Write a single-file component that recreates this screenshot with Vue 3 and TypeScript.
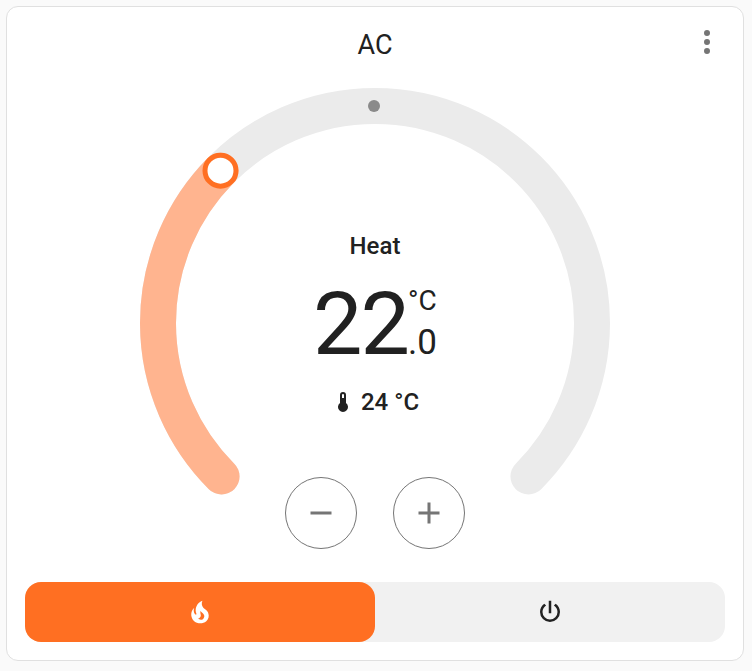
<script setup lang="ts">
const R = 217
const C = 240
const polar = (deg: number) => {
  const a = (deg * Math.PI) / 180
  return { x: C + R * Math.sin(a), y: C - R * Math.cos(a) }
}
const arc = (from: number, to: number) => {
  const s = polar(from)
  const e = polar(to)
  const large = to - from > 180 ? 1 : 0
  return `M${s.x} ${s.y}A${R} ${R} 0 ${large} 1 ${e.x} ${e.y}`
}
const track = arc(-135, 135)
const active = arc(-135, -45.4)
const handle = polar(-45.4)
const dot = polar(0)
const icons = {
  dots: 'M12,16A2,2 0 0,1 14,18A2,2 0 0,1 12,20A2,2 0 0,1 10,18A2,2 0 0,1 12,16M12,10A2,2 0 0,1 14,12A2,2 0 0,1 12,14A2,2 0 0,1 10,12A2,2 0 0,1 12,10M12,4A2,2 0 0,1 14,6A2,2 0 0,1 12,8A2,2 0 0,1 10,6A2,2 0 0,1 12,4Z',
  thermo: 'M15 13V5A3 3 0 0 0 9 5V13A5 5 0 1 0 15 13M12 4A1 1 0 0 1 13 5V8H11V5A1 1 0 0 1 12 4Z',
  minus: 'M19,13H5V11H19V13Z',
  plus: 'M19,13H13V19H11V13H5V11H11V5H13V11H19V13Z',
  fire: 'M17.66 11.2C17.43 10.9 17.15 10.64 16.89 10.38C16.22 9.78 15.46 9.35 14.82 8.72C13.33 7.26 13 4.85 13.95 3C13 3.23 12.17 3.75 11.46 4.32C8.87 6.4 7.85 10.07 9.07 13.22C9.11 13.32 9.15 13.42 9.15 13.55C9.15 13.77 9 13.97 8.8 14.05C8.57 14.15 8.33 14.09 8.14 13.93C8.08 13.88 8.04 13.83 8 13.76C6.87 12.33 6.69 10.28 7.45 8.64C5.78 10 4.87 12.3 5 14.47C5.06 14.97 5.12 15.47 5.29 15.97C5.43 16.57 5.7 17.17 6 17.7C7.08 19.43 8.95 20.67 10.96 20.92C13.1 21.19 15.39 20.8 17.03 19.32C18.86 17.66 19.5 15 18.56 12.72L18.43 12.46C18.22 12 17.66 11.2 17.66 11.2M14.5 17.5C14.22 17.74 13.76 18 13.4 18.1C12.28 18.5 11.16 17.94 10.5 17.28C11.69 17 12.4 16.12 12.61 15.23C12.78 14.43 12.46 13.77 12.33 13C12.21 12.26 12.23 11.63 12.5 10.94C12.69 11.32 12.89 11.7 13.13 12C13.9 13 15.11 13.44 15.37 14.8C15.41 14.94 15.43 15.08 15.43 15.23C15.46 16.05 15.1 16.95 14.5 17.5H14.5Z',
  power: 'M16.56,5.44L15.11,6.89C16.84,7.94 18,9.83 18,12A6,6 0 0,1 12,18A6,6 0 0,1 6,12C6,9.83 7.16,7.94 8.88,6.88L7.44,5.44C5.36,6.88 4,9.28 4,12A8,8 0 0,0 12,20A8,8 0 0,0 20,12C20,9.28 18.64,6.88 16.56,5.44M13,3H11V13H13'
}
</script>

<template>
  <div class="page">
    <div class="card">
      <header class="head">
        <span></span>
        <h1 class="title">AC</h1>
        <button class="more" aria-label="More">
          <svg viewBox="0 0 24 24" class="i36"><path :d="icons.dots" /></svg>
        </button>
      </header>

      <section class="gauge">
        <svg class="dial" viewBox="0 0 480 480">
          <path :d="track" class="track" />
          <path :d="active" class="active" />
          <circle :cx="dot.x - 1" :cy="dot.y" r="6" class="dot" />
          <circle :cx="handle.x" :cy="handle.y" r="15.5" class="handle" />
        </svg>
        <div class="info">
          <div class="mode">Heat</div>
          <div class="temp">
            <span class="int">22</span>
            <span class="side">
              <span class="unit">°C</span>
              <span class="dec">.0</span>
            </span>
          </div>
          <div class="current">
            <svg viewBox="0 0 24 24" class="i24"><path :d="icons.thermo" /></svg>
            <span>24 °C</span>
          </div>
        </div>
        <div class="steps">
          <button class="step" aria-label="Decrease">
            <svg viewBox="0 0 24 24" class="i36"><path :d="icons.minus" /></svg>
          </button>
          <button class="step" aria-label="Increase">
            <svg viewBox="0 0 24 24" class="i36"><path :d="icons.plus" /></svg>
          </button>
        </div>
      </section>

      <div class="modes">
        <button class="seg on" aria-label="Heat">
          <svg viewBox="0 0 24 24" class="i30"><path :d="icons.fire" /></svg>
        </button>
        <button class="seg" aria-label="Off">
          <svg viewBox="0 0 24 24" class="i30"><path :d="icons.power" /></svg>
        </button>
      </div>
    </div>
  </div>
</template>

<style scoped>
.page {
  width: 752px;
  height: 671px;
  padding: 6px 8px 10px 6px;
  box-sizing: border-box;
  background: #fafafa;
  font-family: Roboto, "Liberation Sans", sans-serif;
  color: #212121;
}
.card {
  box-sizing: border-box;
  height: 655px;
  background: #fff;
  border: 1px solid #e0e0e0;
  border-radius: 12px;
  padding: 0 18px 18px;
}
.head {
  height: 76px;
  box-sizing: border-box;
  padding-top: 17px;
  display: grid;
  grid-template-columns: 1fr auto 1fr;
  align-items: start;
}
.title {
  margin: 3px 0 0;
  font-size: 27px;
  font-weight: 400;
  line-height: 36px;
}
.more {
  justify-self: end;
  color: #757575;
}
button {
  border: 0;
  padding: 0;
  margin: 0;
  background: none;
  display: flex;
  align-items: center;
  justify-content: center;
  color: inherit;
}
svg path {
  fill: currentColor;
}
.i24 { width: 24px; height: 24px; display: block; }
.i30 { width: 30px; height: 30px; display: block; }
.i36 { width: 36px; height: 36px; display: block; }
.gauge {
  position: relative;
  width: 480px;
  height: 480px;
  margin: 0 auto 19px;
}
.dial {
  display: block;
  width: 480px;
  height: 480px;
}
.dial path {
  fill: none;
  stroke-width: 36;
  stroke-linecap: round;
}
.dial .track { stroke: #ebebeb; }
.dial .active { stroke: #ffb48f; }
.dial .dot { fill: #8a8a8a; }
.dial .handle {
  fill: #fff;
  stroke: #ff6f22;
  stroke-width: 5;
}
.info {
  position: absolute;
  left: 0;
  right: 0;
  top: 146px;
  display: flex;
  flex-direction: column;
  align-items: center;
}
.mode {
  font-size: 24px;
  font-weight: 470;
  line-height: 34px;
}
.temp {
  display: flex;
  margin-top: 15px;
  height: 88px;
  align-items: stretch;
}
.int {
  font-size: 88px;
  line-height: 92px;
  font-weight: 400;
  letter-spacing: -2px;
}
.side {
  display: flex;
  flex-direction: column;
  justify-content: flex-start;
  padding-top: 8px;
}
.unit { font-size: 28px; line-height: 30px; }
.dec { font-size: 35px; line-height: 40px; margin-top: 7px; }
.current {
  display: flex;
  align-items: center;
  gap: 6px;
  margin-top: 20px;
  font-size: 24px;
  font-weight: 470;
  line-height: 32px;
}
.steps {
  position: absolute;
  left: 0;
  right: 0;
  top: 394px;
  display: flex;
  justify-content: center;
  gap: 36px;
}
.step {
  width: 72px;
  height: 72px;
  box-sizing: border-box;
  border: 1px solid #757575;
  border-radius: 50%;
  color: #757575;
}
.modes {
  display: flex;
  height: 60px;
  background: #f1f1f1;
  border-radius: 16px;
}
.seg {
  flex: 1;
  height: 60px;
  border-radius: 16px;
}
.seg.on {
  background: #ff6f22;
  color: #fff;
}
</style>
<style>
html, body { margin: 0; background: #fafafa; }
</style>
